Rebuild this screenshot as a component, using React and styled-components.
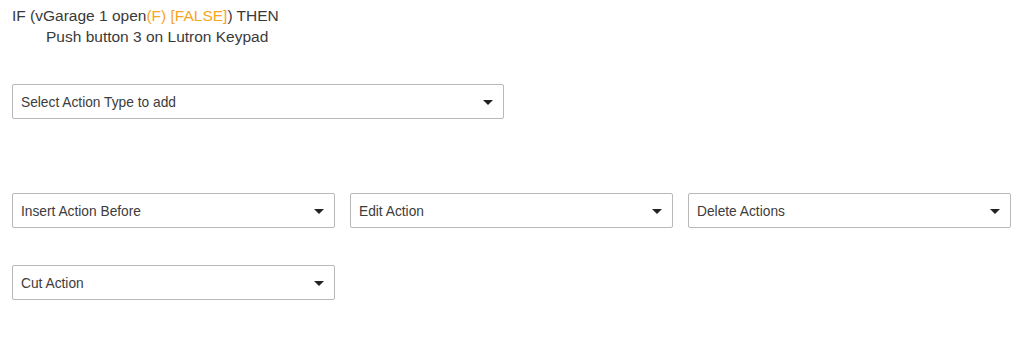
import React from "react";
import styled, { createGlobalStyle } from "styled-components";

const Global = createGlobalStyle`
  html, body { margin: 0; padding: 0; background: #fff; }
  body { font-family: "Liberation Sans", Arial, sans-serif; color: #333; }
`;

const Page = styled.div`
  padding: 5px 13px 0 12px;
  width: 1024px;
  box-sizing: border-box;
`;

const Summary = styled.div`
  font-size: 15.5px;
  line-height: 21px;
  color: #3a3a3a;
`;

const Line = styled.div`
  padding-left: ${(p) => (p.$indent ? "34px" : "0")};
`;

const Hl = styled.span`
  color: #f5a623;
`;

const Grid = styled.div`
  display: grid;
  grid-template-columns: repeat(${(p) => p.$cols || 3}, 1fr);
  column-gap: 15px;
  margin-top: ${(p) => p.$top}px;
`;

const SelectBox = styled.div`
  height: 35px;
  box-sizing: border-box;
  border: 1px solid #b8b8b8;
  border-radius: 2px;
  display: flex;
  align-items: center;
  justify-content: space-between;
  padding: 1px 10px 0 8px;
  font-size: 13.75px;
  color: #3c3c3c;
  background: #fff;
`;

const Caret = styled.span`
  width: 0;
  height: 0;
  border-left: 5.5px solid transparent;
  border-right: 5.5px solid transparent;
  border-top: 5px solid #222;
`;

const Select = ({ children }) => (
  <SelectBox>
    <span>{children}</span>
    <Caret />
  </SelectBox>
);

export default function App() {
  return (
    <>
      <Global />
      <Page>
        <Summary>
          <Line>
            IF (vGarage 1 open<Hl>(F) [FALSE]</Hl>) THEN
          </Line>
          <Line $indent>Push button 3 on Lutron Keypad</Line>
        </Summary>
        <Grid $cols={2} $top={37}>
          <Select>Select Action Type to add</Select>
        </Grid>
        <Grid $top={74}>
          <Select>Insert Action Before</Select>
          <Select>Edit Action</Select>
          <Select>Delete Actions</Select>
        </Grid>
        <Grid $top={37}>
          <Select>Cut Action</Select>
        </Grid>
      </Page>
    </>
  );
}
